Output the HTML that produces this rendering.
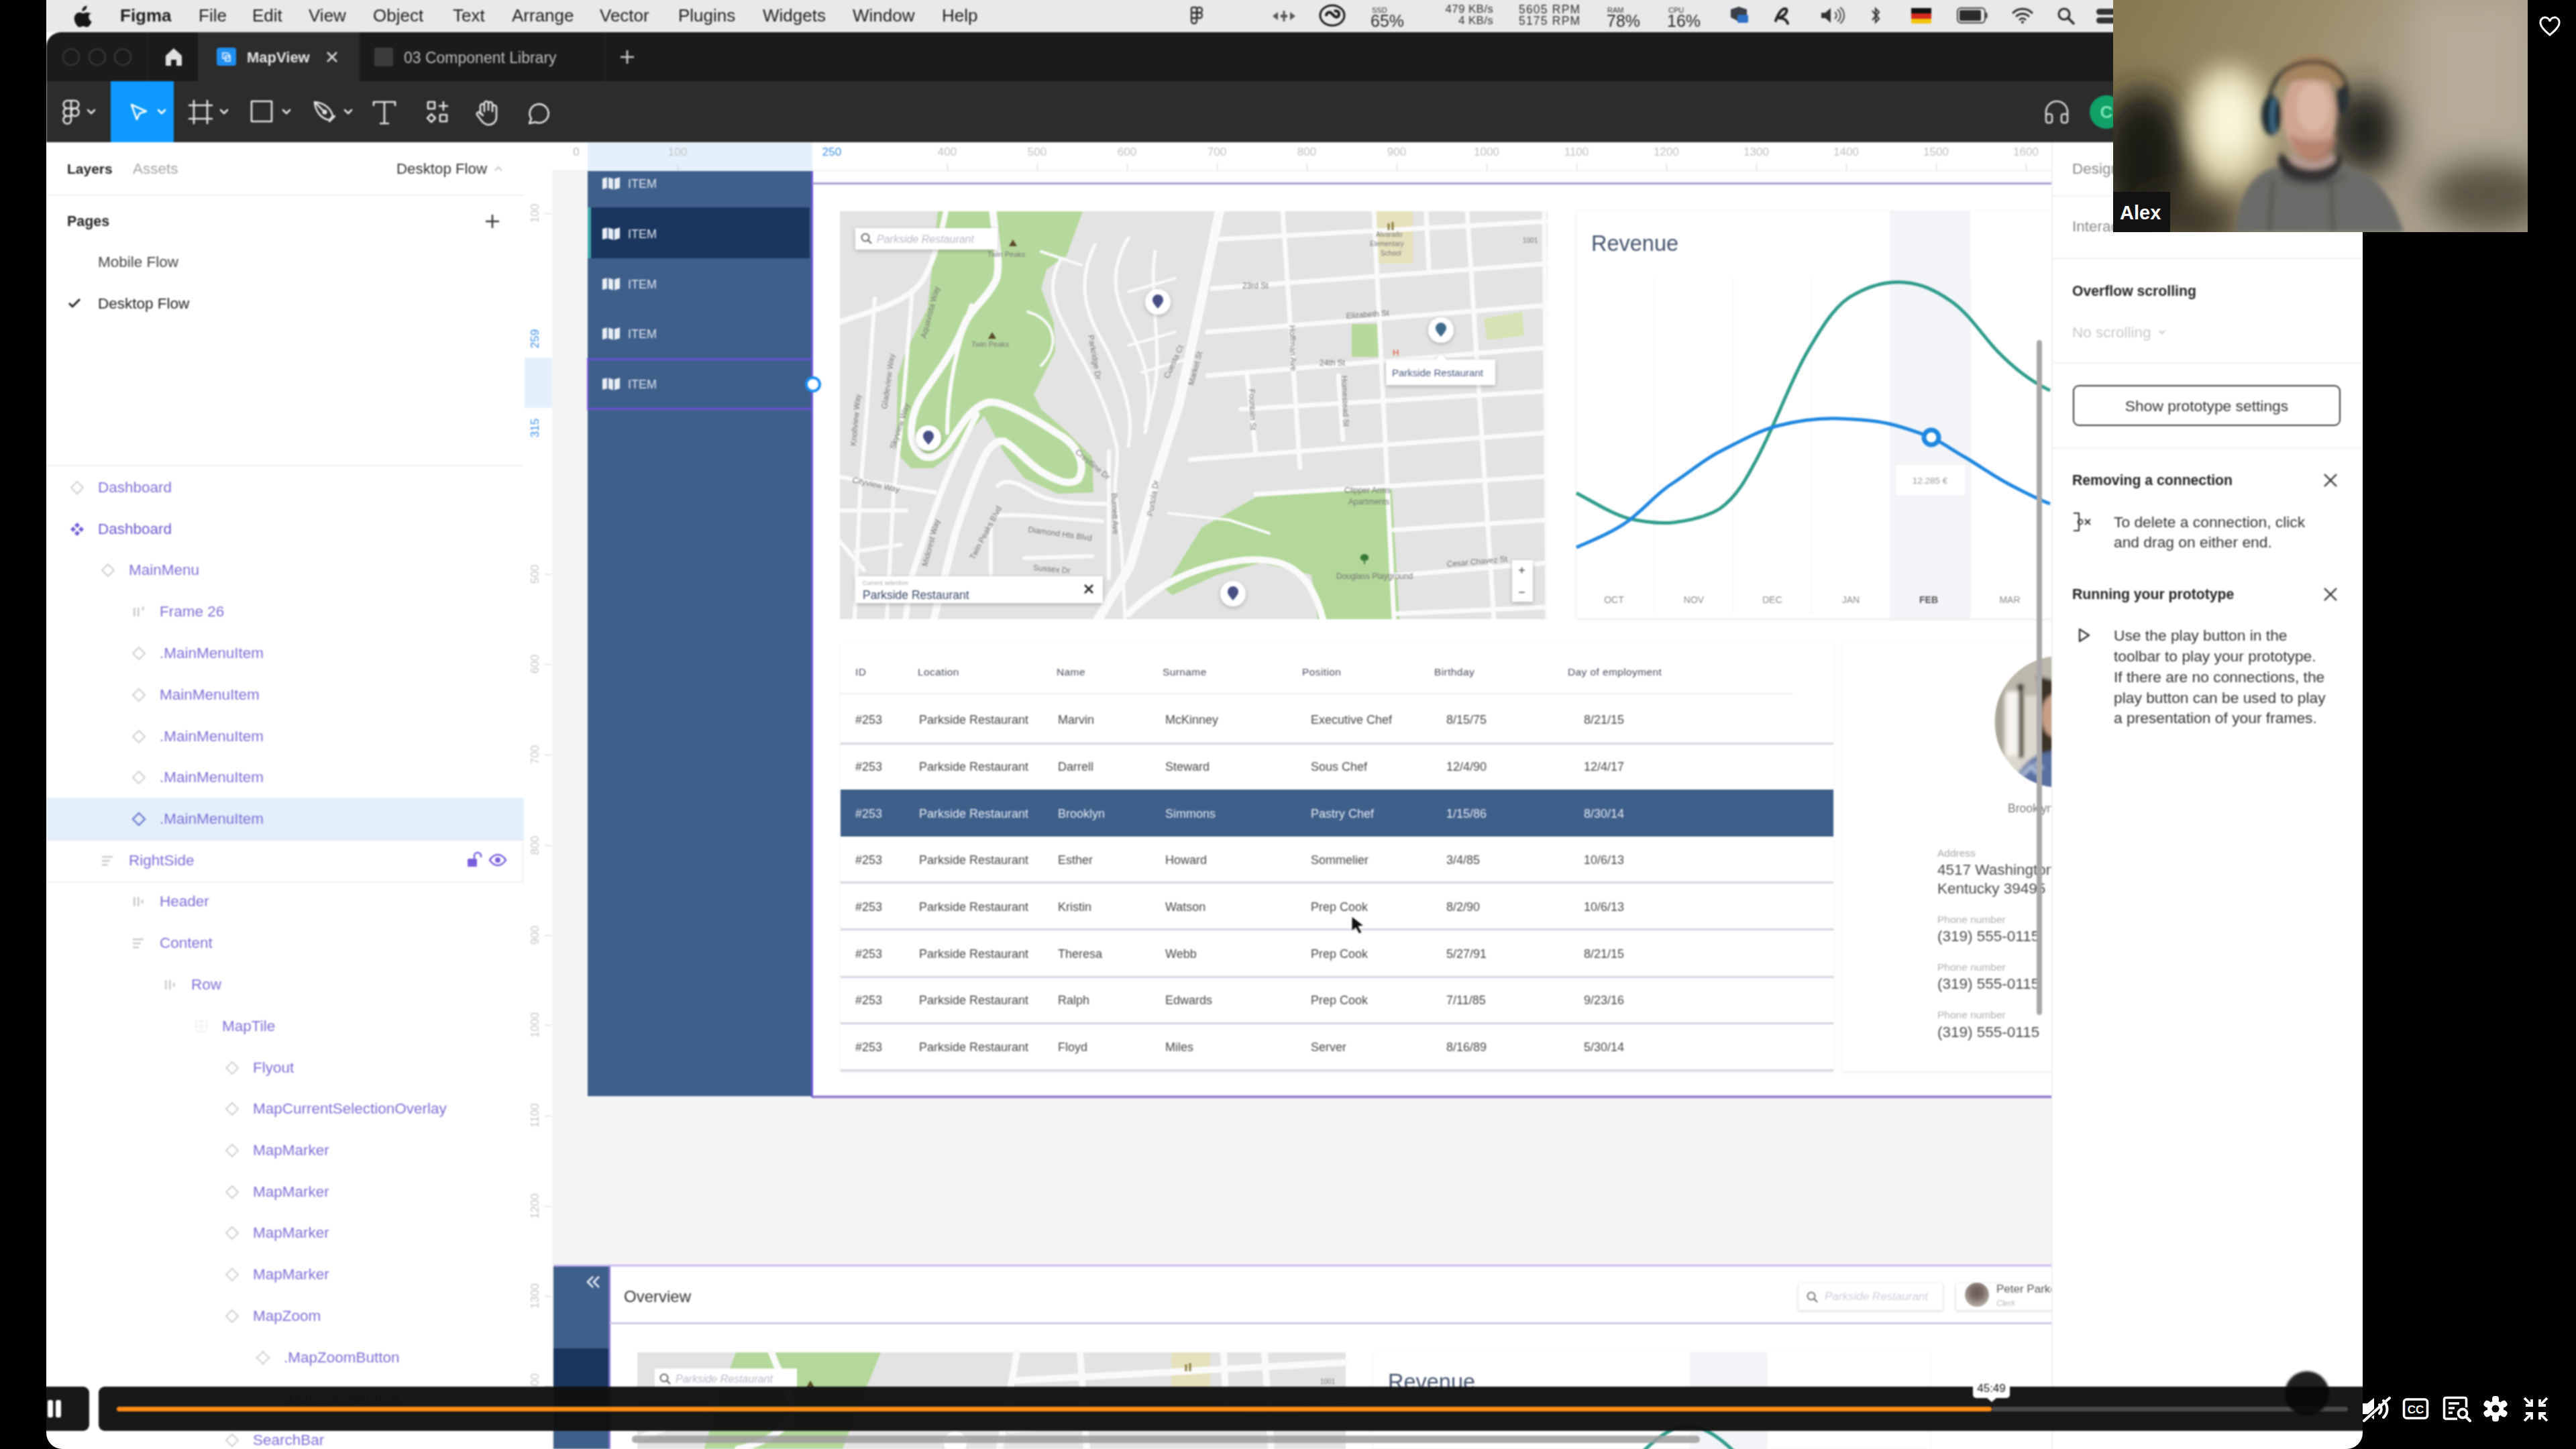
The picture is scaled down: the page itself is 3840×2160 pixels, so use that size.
<!DOCTYPE html>
<html><head><meta charset="utf-8">
<style>
html,body{margin:0;padding:0;width:3840px;height:2160px;overflow:hidden;background:#000;font-family:"Liberation Sans",sans-serif;}
.a{position:absolute;}
.t{position:absolute;white-space:nowrap;}
#frame{position:absolute;left:0;top:0;width:3840px;height:2160px;clip-path:inset(0 318px 0 69px round 0 0 24px 24px);background:#fff;filter:blur(0.9px);}
.mb{position:absolute;top:0;height:46px;line-height:46px;font-size:26px;color:#1e1e1e;}
.stat{position:absolute;font-size:14px;line-height:14px;color:#333;}
.statb{position:absolute;font-size:25px;line-height:25px;color:#2a2a2a;}
.ly{font-size:22.5px;line-height:40px;}
.tb{position:absolute;top:121px;height:91px;}
svg{position:absolute;overflow:visible;}
</style></head>
<body>
<div id="frame">
  <div class="a" style="left:0;top:-40px;width:3840px;height:40px;background:#e9e9ec"></div>
  <div class="a" style="left:0;top:2160px;width:3840px;height:40px;background:#fff"></div>
  <!-- ===== MENU BAR ===== -->
  <div class="a" style="left:69px;top:0;width:3453px;height:48px;background:#e9e9ec"></div>
  <svg style="left:110px;top:8px" width="28" height="32" viewBox="0 0 28 32"><path d="M19.5 0.5c0.3 2.2-0.6 4.3-1.9 5.8-1.4 1.5-3.3 2.6-5.3 2.5-0.3-2.1 0.7-4.3 2-5.7 1.4-1.5 3.5-2.5 5.2-2.6zM25.8 11.3c-0.2 0.1-3.5 2-3.5 6.1 0 4.8 4.2 6.5 4.3 6.5 0 0.1-0.7 2.3-2.2 4.6-1.4 2-2.8 3.9-5 3.9-2.2 0-2.8-1.3-5.3-1.3-2.5 0-3.3 1.3-5.3 1.4-2.1 0.1-3.7-2.1-5.1-4.1C0.9 24.3-0.9 17.6 2.8 13.5c1.4-1.9 3.6-3.1 5.9-3.1 2.2 0 3.6 1.4 5.4 1.4 1.7 0 2.8-1.4 5.4-1.4 1.9 0 4.5 0.7 6.3 2.9z" fill="#151515"/></svg>
  <div class="mb" style="left:179px;font-weight:bold;">Figma</div>
  <div class="mb" style="left:296px;">File</div>
  <div class="mb" style="left:376px;">Edit</div>
  <div class="mb" style="left:460px;">View</div>
  <div class="mb" style="left:556px;">Object</div>
  <div class="mb" style="left:675px;">Text</div>
  <div class="mb" style="left:763px;">Arrange</div>
  <div class="mb" style="left:894px;">Vector</div>
  <div class="mb" style="left:1011px;">Plugins</div>
  <div class="mb" style="left:1137px;">Widgets</div>
  <div class="mb" style="left:1271px;">Window</div>
  <div class="mb" style="left:1404px;">Help</div>
  <!-- status icons -->
  <svg style="left:1774px;top:9px" width="20" height="30" viewBox="0 0 20 30"><g fill="none" stroke="#333" stroke-width="2.4"><rect x="2" y="2" width="8" height="8" rx="2"/><rect x="10" y="2" width="8" height="8" rx="4"/><rect x="2" y="10" width="8" height="8" rx="2"/><circle cx="14" cy="14" r="4"/><path d="M2 18h8v4a4 4 0 0 1-8 0z"/></g></svg>
  <svg style="left:1895px;top:14px" width="38" height="20" viewBox="0 0 38 20"><path d="M2 10l8-6v12zM36 10l-8-6v12zM14 8h10v4H14z" fill="#555"/><path d="M19 2v16" stroke="#555" stroke-width="3"/></svg>
  <svg style="left:1966px;top:5px" width="40" height="36" viewBox="0 0 40 36"><ellipse cx="20" cy="18" rx="18" ry="15" fill="none" stroke="#1a1a1a" stroke-width="3"/><path d="M11 19c0-5 4-7 7-5l5 5c3 3 7 1 7-3 0-4-4-6-7-4" fill="none" stroke="#1a1a1a" stroke-width="4"/></svg>
  <div class="stat" style="left:2045px;top:8px;font-size:11px;">SSD</div>
  <div class="statb" style="left:2043px;top:19px;">65%</div>
  <div class="stat" style="left:2126px;top:7px;width:100px;text-align:right;font-size:17px;letter-spacing:0.3px;">479 KB/s</div>
  <div class="stat" style="left:2126px;top:24px;width:100px;text-align:right;font-size:17px;letter-spacing:0.3px;">4 KB/s</div>
  <div class="stat" style="left:2264px;top:7px;font-size:17.5px;letter-spacing:1.2px;">5605 RPM</div>
  <div class="stat" style="left:2264px;top:24px;font-size:17.5px;letter-spacing:1.2px;">5175 RPM</div>
  <div class="stat" style="left:2396px;top:8px;font-size:11px;">RAM</div>
  <div class="statb" style="left:2395px;top:19px;">78%</div>
  <div class="stat" style="left:2487px;top:8px;font-size:11px;">CPU</div>
  <div class="statb" style="left:2485px;top:19px;">16%</div>
  <svg style="left:2577px;top:8px" width="32" height="30" viewBox="0 0 32 30"><path d="M3 6l12-4 12 4v12l-12 6-12-6z" fill="#3a3f48"/><rect x="13" y="14" width="16" height="12" rx="2" fill="#2f6fc4"/></svg>
  <svg style="left:2643px;top:9px" width="34" height="28" viewBox="0 0 34 28"><path d="M4 22c3-8 8-18 14-18 4 0 3 6-2 10-3 2-8 4-8 4 5 0 11 0 14 8" fill="none" stroke="#222" stroke-width="4" stroke-linecap="round"/></svg>
  <svg style="left:2713px;top:10px" width="36" height="26" viewBox="0 0 36 26"><path d="M2 9h6l8-7v22l-8-7H2z" fill="#333"/><path d="M22 8a6 6 0 0 1 0 10M26 4a11 11 0 0 1 0 18M30 1a15 15 0 0 1 0 24" fill="none" stroke="#444" stroke-width="2"/></svg>
  <svg style="left:2788px;top:8px" width="16" height="30" viewBox="0 0 16 30"><path d="M3 8l10 12-5 5V5l5 5-10 12" fill="none" stroke="#333" stroke-width="2.2"/></svg>
  <div class="a" style="left:2849px;top:12px;width:30px;height:8px;background:#111"></div>
  <div class="a" style="left:2849px;top:20px;width:30px;height:8px;background:#d42a1f"></div>
  <div class="a" style="left:2849px;top:28px;width:30px;height:7px;background:#f2c40c"></div>
  <svg style="left:2917px;top:11px" width="48" height="24" viewBox="0 0 48 24"><rect x="1" y="1" width="41" height="22" rx="5" fill="none" stroke="#444" stroke-width="2"/><rect x="4" y="4" width="32" height="16" rx="2" fill="#2a2a2a"/><path d="M44 8v8" stroke="#444" stroke-width="3"/></svg>
  <svg style="left:2999px;top:10px" width="32" height="26" viewBox="0 0 32 26"><path d="M2 9a20 20 0 0 1 28 0M7 14a13 13 0 0 1 18 0M12 19a6 6 0 0 1 8 0" fill="none" stroke="#2a2a2a" stroke-width="3" stroke-linecap="round"/><circle cx="16" cy="23" r="2" fill="#2a2a2a"/></svg>
  <svg style="left:3066px;top:10px" width="28" height="28" viewBox="0 0 28 28"><circle cx="11" cy="11" r="8" fill="none" stroke="#2a2a2a" stroke-width="3"/><path d="M17 17l8 8" stroke="#2a2a2a" stroke-width="3.5" stroke-linecap="round"/></svg>
  <svg style="left:3124px;top:11px" width="34" height="26" viewBox="0 0 34 26"><rect x="1" y="2" width="30" height="9" rx="4.5" fill="#333"/><rect x="1" y="15" width="30" height="9" rx="4.5" fill="#333"/></svg>

  <!-- ===== TAB BAR ===== -->
  <div class="a" style="left:69px;top:48px;width:3453px;height:73px;background:#1b1b1b;border-radius:22px 0 0 0"></div>
  <div class="a" style="left:295px;top:48px;width:241px;height:73px;background:#2c2c2c"></div>
  <div class="a" style="left:220px;top:48px;width:1px;height:73px;background:#2a2a2a"></div>
  <div class="a" style="left:901px;top:48px;width:1px;height:73px;background:#2a2a2a"></div>
  <div class="a" style="left:93px;top:72px;width:22px;height:22px;border:2px solid #3b3b3b;border-radius:50%"></div>
  <div class="a" style="left:132px;top:72px;width:22px;height:22px;border:2px solid #3b3b3b;border-radius:50%"></div>
  <div class="a" style="left:170px;top:72px;width:22px;height:22px;border:2px solid #3b3b3b;border-radius:50%"></div>
  <svg style="left:246px;top:71px" width="26" height="28" viewBox="0 0 26 28"><path d="M13 1L1 12v15h8v-9h8v9h8V12z" fill="#e0e0e0"/></svg>
  <div class="a" style="left:323px;top:71px;width:29px;height:27px;background:#1f8ff0;border-radius:4px"></div>
  <svg style="left:323px;top:71px" width="29" height="27" viewBox="0 0 29 27"><path d="M9 8h6a4 4 0 0 1 0 8H9zM13 12h7v8h-7z" fill="none" stroke="#cfe6ff" stroke-width="2"/></svg>
  <div class="t" style="left:368px;top:68px;font-size:22px;line-height:36px;color:#e4e4e4;font-weight:bold;">MapView</div>
  <svg style="left:486px;top:76px" width="18" height="18" viewBox="0 0 18 18"><path d="M2 2l14 14M16 2L2 16" stroke="#d8d8d8" stroke-width="2.6"/></svg>
  <div class="a" style="left:558px;top:71px;width:28px;height:28px;background:#3b3b3b;border-radius:3px"></div>
  <div class="t" style="left:602px;top:68px;font-size:23px;line-height:36px;color:#bdbdbd;">03 Component Library</div>
  <svg style="left:924px;top:74px" width="22" height="22" viewBox="0 0 22 22"><path d="M11 1v20M1 11h20" stroke="#d0d0d0" stroke-width="2.6"/></svg>

  <!-- ===== TOOLBAR ===== -->
  <div class="a" style="left:69px;top:121px;width:3453px;height:91px;background:#2c2c2c"></div>
  <div class="a" style="left:165px;top:121px;width:94px;height:91px;background:#0d99ff"></div>
  <g></g>
  <svg style="left:0;top:0" width="3840" height="220" viewBox="0 0 3840 220">
    <g fill="none" stroke="#e6e6e6" stroke-width="2.6" stroke-linecap="round" stroke-linejoin="round">
      <!-- figma logo -->
      <path d="M106 150h-5.5a5.75 5.75 0 0 0 0 11.5h5.5zM106 150h5.5a5.75 5.75 0 0 1 0 11.5h-5.5zM106 161.5h-5.5a5.75 5.75 0 0 0 0 11.5h5.5zM106 173h-5.5a5.75 5.75 0 1 0 5.5 5.75z"/><circle cx="111.75" cy="167.25" r="5.75"/>
      <path d="M131 164l5 5 5-5"/>
      <!-- select arrow -->
      <path d="M196 156l22 10-10 3-4 9z" stroke="#fff"/>
      <path d="M236 164l5 5 5-5" stroke="#fff"/>
      <!-- frame -->
      <path d="M289 150v34M309 150v34M282 157h34M282 177h34"/>
      <path d="M329 164l5 5 5-5"/>
      <!-- rect -->
      <rect x="375" y="151" width="30" height="30"/>
      <path d="M422 164l5 5 5-5"/>
      <!-- pen -->
      <path d="M469 152C481 153 493 160 496 173L491 179C478 177 470 165 469 152zM469 152l14 14M491 181l8-8"/><circle cx="484" cy="167" r="2.2" fill="#e6e6e6"/>
      <path d="M514 164l5 5 5-5"/>
      <!-- text -->
      <path d="M557 152h32M573 152v32M567 184h12M557 152v5M589 152v5"/>
      <!-- components -->
      <rect x="638" y="152" width="10" height="10"/><path d="M661 152v12M655 158h12"/><path d="M643 170l6 6-6 6-6-6z"/><rect x="656" y="171" width="10" height="10"/>
      <!-- hand -->
      <path d="M716 170v-12a3 3 0 0 1 6 0v8M722 164v-10a3 3 0 0 1 6 0v10M728 164v-9a3 3 0 0 1 6 0v11M734 166v-6a3 3 0 0 1 6 0v14c0 8-6 12-12 12-5 0-8-3-11-7l-6-8a3 3 0 0 1 5-3l4 4"/>
      <!-- comment -->
      <path d="M789 184l3-7a14 14 0 1 1 6 5z"/>
    </g>
  </svg>

  <svg style="left:3046px;top:148px" width="40" height="38" viewBox="0 0 40 38"><g fill="none" stroke="#d8d8d8" stroke-width="2.6"><path d="M4 24V19a16 16 0 0 1 32 0v5"/><rect x="4" y="22" width="9" height="13" rx="3"/><rect x="27" y="22" width="9" height="13" rx="3"/></g></svg>
  <div class="a" style="left:3115px;top:142px;width:50px;height:50px;border-radius:50%;background:#10a068"></div>
  <div class="t" style="left:3115px;top:150px;width:50px;text-align:center;font-size:26px;line-height:34px;font-weight:bold;color:#7ee8b8">C</div>
  <!-- ===== LEFT PANEL ===== -->
  <div class="a" style="left:69px;top:212px;width:712px;height:1948px;background:#fff"></div>
  <div class="t" style="left:100px;top:236px;font-size:21px;line-height:32px;font-weight:bold;color:#222">Layers</div>
  <div class="t" style="left:198px;top:236px;font-size:22.5px;line-height:32px;color:#a5a5a5">Assets</div>
  <div class="t" style="left:591px;top:236px;font-size:22.3px;line-height:32px;color:#333">Desktop Flow</div>
  <svg style="left:736px;top:246px" width="14" height="10" viewBox="0 0 14 10"><path d="M2 8l5-5 5 5" fill="none" stroke="#c8c8c8" stroke-width="2"/></svg>
  <div class="a" style="left:69px;top:290px;width:712px;height:2px;background:#f0f0f0"></div>
  <div class="t" style="left:100px;top:314px;font-size:21.4px;line-height:32px;font-weight:bold;color:#222">Pages</div>
  <svg style="left:722px;top:318px" width="24" height="24" viewBox="0 0 24 24"><path d="M12 2v20M2 12h20" stroke="#333" stroke-width="2.4"/></svg>
  <div class="t" style="left:146px;top:375px;font-size:22.5px;line-height:32px;color:#444">Mobile Flow</div>
  <svg style="left:101px;top:443px" width="20" height="18" viewBox="0 0 20 18"><path d="M2 9l5 5 11-11" fill="none" stroke="#222" stroke-width="3"/></svg>
  <div class="t" style="left:146px;top:437px;font-size:22.5px;line-height:32px;color:#222">Desktop Flow</div>
  <div class="a" style="left:69px;top:693px;width:712px;height:2px;background:#f2f2f2"></div>
  <div class="a" style="left:69px;top:1189px;width:712px;height:63px;background:#e3effb"></div>
  <div class="a" style="left:69px;top:1252px;width:710px;height:61px;border:1px solid #e4e0f2;border-left:none"></div>
  <svg style="left:694px;top:1268px" width="24" height="26" viewBox="0 0 24 26"><rect x="3" y="12" width="14" height="12" rx="1.5" fill="#7a5fdc"/><path d="M13 12V8a5 5 0 0 1 10 0v2" fill="none" stroke="#7a5fdc" stroke-width="2.4"/></svg>
  <svg style="left:728px;top:1272px" width="28" height="20" viewBox="0 0 28 20"><path d="M2 10c4-6 8-8 12-8s8 2 12 8c-4 6-8 8-12 8s-8-2-12-8z" fill="none" stroke="#7a5fdc" stroke-width="2.4"/><circle cx="14" cy="10" r="4" fill="#7a5fdc"/></svg>
<div class="t ly" style="left:146px;top:707px;color:#7d70d4">Dashboard</div>
<svg style="left:104px;top:716px" width="22" height="22" viewBox="0 0 22 22"><path d="M11 2l9 9-9 9-9-9z" fill="none" stroke="#d0d0d0" stroke-width="2"/></svg>
<div class="t ly" style="left:146px;top:769px;color:#6a58cc">Dashboard</div>
<svg style="left:104px;top:778px" width="22" height="22" viewBox="0 0 22 22"><g fill="#6f5bd8"><path d="M11 1l4 4-4 4-4-4z"/><path d="M11 13l4 4-4 4-4-4z"/><path d="M5 7l4 4-4 4-4-4z"/><path d="M17 7l4 4-4 4-4-4z"/></g></svg>
<div class="t ly" style="left:192px;top:830px;color:#7d70d4">MainMenu</div>
<svg style="left:150px;top:839px" width="22" height="22" viewBox="0 0 22 22"><path d="M11 2l9 9-9 9-9-9z" fill="none" stroke="#d0d0d0" stroke-width="2"/></svg>
<div class="t ly" style="left:238px;top:892px;color:#7d70d4">Frame 26</div>
<svg style="left:196px;top:901px" width="22" height="22" viewBox="0 0 22 22"><g fill="#c8c8c8"><rect x="3" y="5" width="2.5" height="13"/><rect x="9" y="5" width="2.5" height="13"/><rect x="16" y="3" width="2.5" height="6"/></g></svg>
<div class="t ly" style="left:238px;top:954px;color:#7d70d4">.MainMenuItem</div>
<svg style="left:196px;top:963px" width="22" height="22" viewBox="0 0 22 22"><path d="M11 2l9 9-9 9-9-9z" fill="none" stroke="#d0d0d0" stroke-width="2"/></svg>
<div class="t ly" style="left:238px;top:1016px;color:#7d70d4">MainMenuItem</div>
<svg style="left:196px;top:1025px" width="22" height="22" viewBox="0 0 22 22"><path d="M11 2l9 9-9 9-9-9z" fill="none" stroke="#d0d0d0" stroke-width="2"/></svg>
<div class="t ly" style="left:238px;top:1078px;color:#7d70d4">.MainMenuItem</div>
<svg style="left:196px;top:1087px" width="22" height="22" viewBox="0 0 22 22"><path d="M11 2l9 9-9 9-9-9z" fill="none" stroke="#d0d0d0" stroke-width="2"/></svg>
<div class="t ly" style="left:238px;top:1139px;color:#7d70d4">.MainMenuItem</div>
<svg style="left:196px;top:1148px" width="22" height="22" viewBox="0 0 22 22"><path d="M11 2l9 9-9 9-9-9z" fill="none" stroke="#d0d0d0" stroke-width="2"/></svg>
<div class="t ly" style="left:238px;top:1201px;color:#7d70d4">.MainMenuItem</div>
<svg style="left:196px;top:1210px" width="22" height="22" viewBox="0 0 22 22"><path d="M11 2l9 9-9 9-9-9z" fill="none" stroke="#6f7fd0" stroke-width="2.4"/></svg>
<div class="t ly" style="left:192px;top:1263px;color:#7d70d4">RightSide</div>
<svg style="left:150px;top:1272px" width="22" height="22" viewBox="0 0 22 22"><g fill="#c8c8c8"><rect x="2" y="4" width="16" height="2.5"/><rect x="2" y="10" width="12" height="2.5"/><rect x="2" y="16" width="9" height="2.5"/></g></svg>
<div class="t ly" style="left:238px;top:1324px;color:#7d70d4">Header</div>
<svg style="left:196px;top:1333px" width="22" height="22" viewBox="0 0 22 22"><g fill="#c8c8c8"><rect x="3" y="4" width="2.5" height="14"/><rect x="9" y="4" width="2.5" height="14"/><rect x="15" y="8" width="2.5" height="6"/></g></svg>
<div class="t ly" style="left:238px;top:1386px;color:#7d70d4">Content</div>
<svg style="left:196px;top:1395px" width="22" height="22" viewBox="0 0 22 22"><g fill="#c8c8c8"><rect x="2" y="4" width="16" height="2.5"/><rect x="2" y="10" width="12" height="2.5"/><rect x="2" y="16" width="9" height="2.5"/></g></svg>
<div class="t ly" style="left:285px;top:1448px;color:#7d70d4">Row</div>
<svg style="left:243px;top:1457px" width="22" height="22" viewBox="0 0 22 22"><g fill="#c8c8c8"><rect x="3" y="4" width="2.5" height="14"/><rect x="9" y="4" width="2.5" height="14"/><rect x="15" y="8" width="2.5" height="6"/></g></svg>
<div class="t ly" style="left:331px;top:1510px;color:#7d70d4">MapTile</div>
<svg style="left:289px;top:1519px" width="22" height="22" viewBox="0 0 22 22"><g fill="none" stroke="#dcdcdc" stroke-width="1.5" stroke-dasharray="2 3"><rect x="3" y="3" width="16" height="16"/><path d="M11 3v16M3 11h16"/></g></svg>
<div class="t ly" style="left:377px;top:1572px;color:#7d70d4">Flyout</div>
<svg style="left:335px;top:1581px" width="22" height="22" viewBox="0 0 22 22"><path d="M11 2l9 9-9 9-9-9z" fill="none" stroke="#d0d0d0" stroke-width="2"/></svg>
<div class="t ly" style="left:377px;top:1633px;color:#7d70d4">MapCurrentSelectionOverlay</div>
<svg style="left:335px;top:1642px" width="22" height="22" viewBox="0 0 22 22"><path d="M11 2l9 9-9 9-9-9z" fill="none" stroke="#d0d0d0" stroke-width="2"/></svg>
<div class="t ly" style="left:377px;top:1695px;color:#7d70d4">MapMarker</div>
<svg style="left:335px;top:1704px" width="22" height="22" viewBox="0 0 22 22"><path d="M11 2l9 9-9 9-9-9z" fill="none" stroke="#d0d0d0" stroke-width="2"/></svg>
<div class="t ly" style="left:377px;top:1757px;color:#7d70d4">MapMarker</div>
<svg style="left:335px;top:1766px" width="22" height="22" viewBox="0 0 22 22"><path d="M11 2l9 9-9 9-9-9z" fill="none" stroke="#d0d0d0" stroke-width="2"/></svg>
<div class="t ly" style="left:377px;top:1818px;color:#7d70d4">MapMarker</div>
<svg style="left:335px;top:1827px" width="22" height="22" viewBox="0 0 22 22"><path d="M11 2l9 9-9 9-9-9z" fill="none" stroke="#d0d0d0" stroke-width="2"/></svg>
<div class="t ly" style="left:377px;top:1880px;color:#7d70d4">MapMarker</div>
<svg style="left:335px;top:1889px" width="22" height="22" viewBox="0 0 22 22"><path d="M11 2l9 9-9 9-9-9z" fill="none" stroke="#d0d0d0" stroke-width="2"/></svg>
<div class="t ly" style="left:377px;top:1942px;color:#7d70d4">MapZoom</div>
<svg style="left:335px;top:1951px" width="22" height="22" viewBox="0 0 22 22"><path d="M11 2l9 9-9 9-9-9z" fill="none" stroke="#d0d0d0" stroke-width="2"/></svg>
<div class="t ly" style="left:423px;top:2004px;color:#7d70d4">.MapZoomButton</div>
<svg style="left:381px;top:2013px" width="22" height="22" viewBox="0 0 22 22"><path d="M11 2l9 9-9 9-9-9z" fill="none" stroke="#d0d0d0" stroke-width="2"/></svg>
<div class="t ly" style="left:423px;top:2066px;color:#7d70d4">.MapZoomButton</div>
<svg style="left:381px;top:2075px" width="22" height="22" viewBox="0 0 22 22"><path d="M11 2l9 9-9 9-9-9z" fill="none" stroke="#d0d0d0" stroke-width="2"/></svg>
<div class="t ly" style="left:377px;top:2127px;color:#7d70d4">SearchBar</div>
<svg style="left:335px;top:2136px" width="22" height="22" viewBox="0 0 22 22"><path d="M11 2l9 9-9 9-9-9z" fill="none" stroke="#d0d0d0" stroke-width="2"/></svg>

  <!-- ===== RULERS ===== -->
  <div class="a" style="left:781px;top:212px;width:2277px;height:42px;background:#fff;border-bottom:1px solid #e6e6e6"></div>
  <div class="a" style="left:876px;top:213px;width:335px;height:41px;background:#e4f0fb"></div>
  <div class="a" style="left:781px;top:254px;width:42px;height:1906px;background:#fff;border-right:1px solid #ececec"></div>
  <div class="a" style="left:782px;top:533px;width:41px;height:75px;background:#e4f0fb"></div>
  <div class="t" style="left:829px;top:217px;width:60px;text-align:center;font-size:17px;line-height:20px;color:#b8b8b8">0</div>
  <div class="t" style="left:980px;top:217px;width:60px;text-align:center;font-size:17px;line-height:20px;color:#c4c4c4">100</div>
  <div class="a" style="left:1010px;top:244px;width:1px;height:10px;background:#d0d0d0"></div>
  <div class="t" style="left:1210px;top:217px;width:60px;text-align:center;font-size:17px;line-height:20px;color:#3b8de0">250</div>
  <div class="t" style="left:1382px;top:217px;width:60px;text-align:center;font-size:17px;line-height:20px;color:#c0c0c0">400</div>
  <div class="a" style="left:1412px;top:244px;width:1px;height:10px;background:#d0d0d0"></div>
  <div class="t" style="left:1516px;top:217px;width:60px;text-align:center;font-size:17px;line-height:20px;color:#c0c0c0">500</div>
  <div class="a" style="left:1546px;top:244px;width:1px;height:10px;background:#d0d0d0"></div>
  <div class="t" style="left:1650px;top:217px;width:60px;text-align:center;font-size:17px;line-height:20px;color:#c0c0c0">600</div>
  <div class="a" style="left:1680px;top:244px;width:1px;height:10px;background:#d0d0d0"></div>
  <div class="t" style="left:1784px;top:217px;width:60px;text-align:center;font-size:17px;line-height:20px;color:#c0c0c0">700</div>
  <div class="a" style="left:1814px;top:244px;width:1px;height:10px;background:#d0d0d0"></div>
  <div class="t" style="left:1918px;top:217px;width:60px;text-align:center;font-size:17px;line-height:20px;color:#c0c0c0">800</div>
  <div class="a" style="left:1948px;top:244px;width:1px;height:10px;background:#d0d0d0"></div>
  <div class="t" style="left:2052px;top:217px;width:60px;text-align:center;font-size:17px;line-height:20px;color:#c0c0c0">900</div>
  <div class="a" style="left:2082px;top:244px;width:1px;height:10px;background:#d0d0d0"></div>
  <div class="t" style="left:2186px;top:217px;width:60px;text-align:center;font-size:17px;line-height:20px;color:#c0c0c0">1000</div>
  <div class="a" style="left:2216px;top:244px;width:1px;height:10px;background:#d0d0d0"></div>
  <div class="t" style="left:2320px;top:217px;width:60px;text-align:center;font-size:17px;line-height:20px;color:#c0c0c0">1100</div>
  <div class="a" style="left:2350px;top:244px;width:1px;height:10px;background:#d0d0d0"></div>
  <div class="t" style="left:2454px;top:217px;width:60px;text-align:center;font-size:17px;line-height:20px;color:#c0c0c0">1200</div>
  <div class="a" style="left:2484px;top:244px;width:1px;height:10px;background:#d0d0d0"></div>
  <div class="t" style="left:2588px;top:217px;width:60px;text-align:center;font-size:17px;line-height:20px;color:#c0c0c0">1300</div>
  <div class="a" style="left:2618px;top:244px;width:1px;height:10px;background:#d0d0d0"></div>
  <div class="t" style="left:2722px;top:217px;width:60px;text-align:center;font-size:17px;line-height:20px;color:#c0c0c0">1400</div>
  <div class="a" style="left:2752px;top:244px;width:1px;height:10px;background:#d0d0d0"></div>
  <div class="t" style="left:2856px;top:217px;width:60px;text-align:center;font-size:17px;line-height:20px;color:#c0c0c0">1500</div>
  <div class="a" style="left:2886px;top:244px;width:1px;height:10px;background:#d0d0d0"></div>
  <div class="t" style="left:2990px;top:217px;width:60px;text-align:center;font-size:17px;line-height:20px;color:#c0c0c0">1600</div>
  <div class="a" style="left:3020px;top:244px;width:1px;height:10px;background:#d0d0d0"></div>
  <div class="t" style="left:778px;top:308px;width:40px;height:20px;text-align:center;font-size:17px;line-height:20px;color:#c4c4c4;transform:rotate(-90deg)">100</div>
  <div class="a" style="left:812px;top:318px;width:10px;height:1px;background:#d0d0d0"></div>
  <div class="t" style="left:778px;top:495px;width:40px;height:20px;text-align:center;font-size:17px;line-height:20px;color:#3b8de0;transform:rotate(-90deg)">259</div>
  <div class="t" style="left:778px;top:628px;width:40px;height:20px;text-align:center;font-size:17px;line-height:20px;color:#3b8de0;transform:rotate(-90deg)">315</div>
  <div class="t" style="left:778px;top:846px;width:40px;height:20px;text-align:center;font-size:17px;line-height:20px;color:#c4c4c4;transform:rotate(-90deg)">500</div>
  <div class="a" style="left:812px;top:856px;width:10px;height:1px;background:#d0d0d0"></div>
  <div class="t" style="left:778px;top:980px;width:40px;height:20px;text-align:center;font-size:17px;line-height:20px;color:#c4c4c4;transform:rotate(-90deg)">600</div>
  <div class="a" style="left:812px;top:990px;width:10px;height:1px;background:#d0d0d0"></div>
  <div class="t" style="left:778px;top:1115px;width:40px;height:20px;text-align:center;font-size:17px;line-height:20px;color:#c4c4c4;transform:rotate(-90deg)">700</div>
  <div class="a" style="left:812px;top:1125px;width:10px;height:1px;background:#d0d0d0"></div>
  <div class="t" style="left:778px;top:1250px;width:40px;height:20px;text-align:center;font-size:17px;line-height:20px;color:#c4c4c4;transform:rotate(-90deg)">800</div>
  <div class="a" style="left:812px;top:1260px;width:10px;height:1px;background:#d0d0d0"></div>
  <div class="t" style="left:778px;top:1384px;width:40px;height:20px;text-align:center;font-size:17px;line-height:20px;color:#c4c4c4;transform:rotate(-90deg)">900</div>
  <div class="a" style="left:812px;top:1394px;width:10px;height:1px;background:#d0d0d0"></div>
  <div class="t" style="left:778px;top:1518px;width:40px;height:20px;text-align:center;font-size:17px;line-height:20px;color:#c4c4c4;transform:rotate(-90deg)">1000</div>
  <div class="a" style="left:812px;top:1528px;width:10px;height:1px;background:#d0d0d0"></div>
  <div class="t" style="left:778px;top:1653px;width:40px;height:20px;text-align:center;font-size:17px;line-height:20px;color:#c4c4c4;transform:rotate(-90deg)">1100</div>
  <div class="a" style="left:812px;top:1663px;width:10px;height:1px;background:#d0d0d0"></div>
  <div class="t" style="left:778px;top:1788px;width:40px;height:20px;text-align:center;font-size:17px;line-height:20px;color:#c4c4c4;transform:rotate(-90deg)">1200</div>
  <div class="a" style="left:812px;top:1798px;width:10px;height:1px;background:#d0d0d0"></div>
  <div class="t" style="left:778px;top:1922px;width:40px;height:20px;text-align:center;font-size:17px;line-height:20px;color:#c4c4c4;transform:rotate(-90deg)">1300</div>
  <div class="a" style="left:812px;top:1932px;width:10px;height:1px;background:#d0d0d0"></div>
  <div class="t" style="left:778px;top:2056px;width:40px;height:20px;text-align:center;font-size:17px;line-height:20px;color:#c4c4c4;transform:rotate(-90deg)">1400</div>
  <div class="a" style="left:812px;top:2066px;width:10px;height:1px;background:#d0d0d0"></div>

  <!-- ===== CANVAS ===== -->
  <div class="a" style="left:823px;top:255px;width:2235px;height:1905px;background:#f4f4f4"></div>
  <div class="a" style="left:876px;top:255px;width:335px;height:1379px;background:#3f5f8b"></div>
  <div class="a" style="left:1211px;top:255px;width:1847px;height:1380px;background:#fff"></div>
<div class="a" style="left:876px;top:309px;width:331px;height:76px;background:#1b365e"></div>
<div class="a" style="left:876px;top:309px;width:5px;height:76px;background:#3fa6a6"></div>
<svg style="left:897px;top:263px" width="28" height="20" viewBox="0 0 28 20"><path d="M1 3l8-2 9 3 9-3v16l-9 3-9-3-8 2z" fill="#e9eef5"/><path d="M9 1v17M18 4v16" stroke="#3f5f8b" stroke-width="2"/></svg>
<div class="t" style="left:936px;top:261px;font-size:18px;line-height:26px;color:#dfe6f0">ITEM</div>
<svg style="left:897px;top:338px" width="28" height="20" viewBox="0 0 28 20"><path d="M1 3l8-2 9 3 9-3v16l-9 3-9-3-8 2z" fill="#e9eef5"/><path d="M9 1v17M18 4v16" stroke="#3f5f8b" stroke-width="2"/></svg>
<div class="t" style="left:936px;top:336px;font-size:18px;line-height:26px;color:#dfe6f0">ITEM</div>
<svg style="left:897px;top:413px" width="28" height="20" viewBox="0 0 28 20"><path d="M1 3l8-2 9 3 9-3v16l-9 3-9-3-8 2z" fill="#e9eef5"/><path d="M9 1v17M18 4v16" stroke="#3f5f8b" stroke-width="2"/></svg>
<div class="t" style="left:936px;top:411px;font-size:18px;line-height:26px;color:#dfe6f0">ITEM</div>
<svg style="left:897px;top:487px" width="28" height="20" viewBox="0 0 28 20"><path d="M1 3l8-2 9 3 9-3v16l-9 3-9-3-8 2z" fill="#e9eef5"/><path d="M9 1v17M18 4v16" stroke="#3f5f8b" stroke-width="2"/></svg>
<div class="t" style="left:936px;top:485px;font-size:18px;line-height:26px;color:#dfe6f0">ITEM</div>
<svg style="left:897px;top:562px" width="28" height="20" viewBox="0 0 28 20"><path d="M1 3l8-2 9 3 9-3v16l-9 3-9-3-8 2z" fill="#e9eef5"/><path d="M9 1v17M18 4v16" stroke="#3f5f8b" stroke-width="2"/></svg>
<div class="t" style="left:936px;top:560px;font-size:18px;line-height:26px;color:#dfe6f0">ITEM</div>
<div class="a" style="left:875px;top:534px;width:336px;height:77px;box-sizing:border-box;border-top:3px solid #6a4fd6;border-bottom:3px solid #6a4fd6;border-left:2px solid #8a5fe0"></div>
<div class="a" style="left:1209px;top:255px;width:3px;height:1381px;background:#6b55d8"></div>
<div class="a" style="left:1211px;top:272px;width:1847px;height:3px;background:#a39bcf"></div>
<div class="a" style="left:1211px;top:1633px;width:1847px;height:4px;background:#9580cc"></div>
<div class="a" style="left:1200px;top:561px;width:16px;height:16px;border:4px solid #1a8cf0;border-radius:50%;background:#fff"></div><svg style="left:1252px;top:315px" width="1055" height="608" viewBox="0 0 1055 608">
<defs><filter id="sh" x="-10%" y="-30%" width="120%" height="160%"><feDropShadow dx="0" dy="2" stdDeviation="3" flood-color="#000" flood-opacity="0.25"/></filter>
<clipPath id="mclip"><rect x="0" y="0" width="1055" height="608"/></clipPath></defs>
<g clip-path="url(#mclip)">
<rect x="0" y="0" width="1055" height="608" fill="#e3e3e3"/>
<!-- parks -->
<path d="M146 0L362 0L338 66L308 87L300 115L319 166L321 209L289 273L300 295L338 328L376 366L378 419L325 421L275 398L245 360L215 305L159 368L139 383L106 383L84 360L86 245L98 209L131 145Z" fill="#b5d99c"/>
<path d="M483 562L540 471L628 422L823 414L834 608L712 608L703 542L628 524L562 542L496 572Z" fill="#b3d89a"/>
<rect x="763" y="168" width="40" height="49" fill="#b7d99c"/>
<path d="M960 160L1017 150L1020 185L965 192Z" fill="#d6e3b4"/>
<rect x="796" y="0" width="58" height="78" fill="#e6e1bd"/>
<!-- roads -->
<g fill="none" stroke="#fafafa" stroke-linecap="round" stroke-linejoin="round">
<path d="M228 0C232 40 240 80 233 102C220 130 195 145 185 170C170 210 145 240 125 270C105 300 100 340 116 358C125 370 140 372 160 350C180 320 195 292 220 285C245 280 300 315 330 335C355 350 368 380 355 400C340 410 320 400 300 388C280 375 260 350 245 343C230 340 220 355 212 372C200 400 185 440 172 480L140 608" stroke-width="11"/><path d="M204 303C185 340 165 380 150 421C135 460 118 510 106 547L98 608" stroke-width="9"/>
<path d="M566 0L535 150L505 290L470 400L432 530L385 608" stroke-width="14"/>
<path d="M0 165C40 150 90 140 118 110C135 90 150 40 158 0" stroke-width="8"/>
<path d="M52 130L40 300L30 420L22 608" stroke-width="6"/>
<path d="M108 120C100 200 96 300 80 420L70 608" stroke-width="6"/>
<path d="M196 140C175 200 160 260 160 330" stroke-width="6"/>
<path d="M0 396L142 419" stroke-width="6"/><path d="M0 446L99 446M23 507L91 497M0 492L36 535" stroke-width="6"/><path d="M235 409C245 400 260 400 290 420C310 432 340 436 396 436M230 454C250 452 275 452 320 456L391 462M225 472V540M275 517L376 514M401 358V547" stroke-width="6"/>
<path d="M330 70C300 120 330 160 350 200C380 250 400 300 410 340C420 370 405 400 412 430L420 500L425 608" stroke-width="5"/>
<path d="M380 50C350 110 370 160 395 200C420 250 440 300 430 350" stroke-width="5"/>
<path d="M430 40C400 90 410 130 430 170C450 210 470 260 455 320" stroke-width="5"/>
<path d="M470 60C460 120 480 200 470 260L455 330" stroke-width="5"/>
<path d="M430 120L500 100M430 200L500 180M450 240L520 220M300 60L360 80M280 150C320 160 330 200 300 230" stroke-width="4"/>
<path d="M490 450L580 460L640 480" stroke-width="4"/>
<path d="M430 600C470 560 520 530 600 520C660 515 700 530 720 608" stroke-width="10"/>
<!-- grid -->
<path d="M555 115L1055 78M548 180L1055 140M548 245L1055 203M598 295L1055 268M522 370L1055 330M620 422L1055 395M826 475L1055 460M826 543L1055 524M826 600L1055 590M560 42L1055 15" stroke-width="7"/>
<path d="M660 0L686 382M796 0L826 608M935 0L975 608M874 0L878 85M607 245L620 360M743 245L750 340M1050 0L1055 608" stroke-width="7"/>
</g>
<!-- labels -->
<g font-family="Liberation Sans" fill="#777" font-size="12">
<text x="600" y="115">23rd St</text>
<text x="755" y="160" transform="rotate(-4 755 160)">Elizabeth St</text>
<text x="715" y="230">24th St</text>
<text x="905" y="530" transform="rotate(-5 905 530)">Cesar Chavez St</text>
<text x="752" y="420">Clipper Arms</text>
<text x="758" y="437">Apartments</text>
<text x="740" y="548">Douglass Playground</text>
<text x="799" y="38" font-size="10">Alvarado</text>
<text x="790" y="52" font-size="10">Elementary</text>
<text x="806" y="66" font-size="10">School</text>
<text x="220" y="68" font-size="11">Twin Peaks</text>
<text x="196" y="202" font-size="11">Twin Peaks</text>
<text x="18" y="404" transform="rotate(12 18 404)">Cityview Way</text>
<text x="1018" y="47" font-size="10">1001</text>
<text x="0" y="0" transform="translate(527 260) rotate(-75)">Market St</text>
<text x="0" y="0" transform="translate(490 250) rotate(-65)">Cuesta Ct</text>
<text x="0" y="0" transform="translate(350 360) rotate(40)">Crestline Dr</text>
<text x="0" y="0" transform="translate(200 520) rotate(-62)">Twin Peaks Blvd</text>
<text x="0" y="0" transform="translate(130 530) rotate(-75)">Midcrest Way</text>
<text x="0" y="0" transform="translate(24 350) rotate(-85)">Knollview Way</text>
<text x="0" y="0" transform="translate(70 295) rotate(-82)">Gladeview Way</text>
<text x="0" y="0" transform="translate(128 190) rotate(-75)">Aquavista Way</text>
<text x="0" y="0" transform="translate(82 355) rotate(-72)">Skyview Way</text>
<text x="0" y="0" transform="translate(370 185) rotate(80)">Parkridge Dr</text>
<text x="0" y="0" transform="translate(405 420) rotate(88)">Burnett Ave</text>
<text x="0" y="0" transform="translate(466 455) rotate(-80)">Portola Dr</text>
<text x="0" y="0" transform="translate(610 265) rotate(88)">Fountain St</text>
<text x="0" y="0" transform="translate(670 170) rotate(88)">Hoffman Ave</text>
<text x="0" y="0" transform="translate(748 245) rotate(88)">Homestead St</text>
<text x="280" y="478" transform="rotate(8 280 478)">Diamond Hts Blvd</text>
<text x="288" y="535" transform="rotate(5 288 535)">Sussex Dr</text>
</g>
<!-- POI icons -->
<path d="M252 52l6-10 6 10z" fill="#5a4a2a"/><path d="M221 190l6-10 6 10z" fill="#5a4a2a"/>
<path d="M818 18v10M824 16v12" stroke="#8a7a3a" stroke-width="3"/>
<path d="M782 512c-6 0-8 8 0 8 8 0 6-8 0-8zM782 518v8" fill="#3a7a3a" stroke="#3a7a3a" stroke-width="2"/>
<text x="824" y="215" fill="#e34a2a" font-size="13" font-family="Liberation Sans">H</text>
<!-- markers -->
<g filter="url(#sh)">
<circle cx="474" cy="135" r="19" fill="#fff"/><circle cx="132" cy="338" r="19" fill="#fff"/><circle cx="896" cy="177" r="19" fill="#fff"/><circle cx="586" cy="570" r="19" fill="#fff"/>
</g>
<g fill="#474f83">
<path d="M474 145c-5-6-8-9-8-13a8 8 0 0 1 16 0c0 4-3 7-8 13z"/>
<path d="M132 348c-5-6-8-9-8-13a8 8 0 0 1 16 0c0 4-3 7-8 13z"/>
<path d="M896 187c-5-6-8-9-8-13a8 8 0 0 1 16 0c0 4-3 7-8 13z" fill="#3f6a8a"/>
<path d="M586 580c-5-6-8-9-8-13a8 8 0 0 1 16 0c0 4-3 7-8 13z"/>
</g>
<!-- flyout -->
<g filter="url(#sh)"><path d="M814 221h74l8-8 8 8h73v38H814z" fill="#fff"/></g>
<text x="823" y="246" font-size="15" fill="#4a5a80" font-family="Liberation Sans">Parkside Restaurant</text>
<!-- search -->
<g filter="url(#sh)"><rect x="23" y="25" width="212" height="32" fill="#fff"/></g>
<circle cx="38" cy="39" r="5.5" fill="none" stroke="#666" stroke-width="2"/><path d="M42 43l5 5" stroke="#666" stroke-width="2.2"/>
<text x="55" y="47" font-size="16" font-style="italic" fill="#b8bcc8" font-family="Liberation Sans">Parkside Restaurant</text>
<!-- current selection -->
<g filter="url(#sh)"><rect x="23" y="544" width="369" height="40" fill="#fff"/></g>
<text x="34" y="557" font-size="9" fill="#aaa" font-family="Liberation Sans">Current selection</text>
<text x="34" y="578" font-size="17.5" fill="#3a4a6a" font-family="Liberation Sans">Parkside Restaurant</text>
<path d="M365 557l12 12M377 557l-12 12" stroke="#222" stroke-width="2.6"/>
<!-- zoom -->
<g filter="url(#sh)"><rect x="1002" y="520" width="31" height="62" fill="#fff"/></g>
<path d="M1012 535h9M1016.5 530.5v9M1012 568h9" stroke="#555" stroke-width="1.6"/>
</g>
</svg>
<div class="a" style="left:2350px;top:315px;width:760px;height:607px;background:#fff;box-shadow:0 1px 4px rgba(0,0,0,0.12)"></div>
<svg style="left:2350px;top:315px" width="706" height="608" viewBox="0 0 706 608">
<rect x="467" y="0" width="120" height="607" fill="#f2f4f8"/>
<g stroke="#f5f5f7" stroke-width="1.5"><path d="M116 100V600M233 100V600M350 100V600M588 100V600"/></g>
<text x="22" y="59" font-family="Liberation Sans" font-size="32.5" fill="#44536e">Revenue</text>
<g font-family="Liberation Sans" font-size="14" fill="#8a8a8a" text-anchor="middle">
<text x="56" y="584">OCT</text><text x="175" y="584">NOV</text><text x="292" y="584">DEC</text><text x="409" y="584">JAN</text><text x="525" y="584" font-weight="bold" fill="#555">FEB</text><text x="646" y="584">MAR</text>
</g>
<path d="M0 420C30 436 55 452 78 458C100 463 120 466 144 464C175 460 200 452 214 443C240 425 255 395 270 367C300 310 320 250 345 208C370 165 390 135 416 123C440 110 465 104 489 106C515 108 535 118 557 133C585 152 605 185 627 208C655 237 680 255 706 267" fill="none" stroke="#2f9c8b" stroke-width="5"/>
<path d="M0 501C25 490 55 478 78 461C105 440 120 420 144 405C170 388 190 370 214 358C245 342 270 328 299 320C330 312 360 308 392 309C420 310 445 312 463 316C490 322 510 330 529 337C548 346 562 357 580 367C605 382 625 397 651 410C670 420 690 430 706 436" fill="none" stroke="#1f87df" stroke-width="5"/>
<circle cx="529" cy="337" r="11" fill="#fff" stroke="#1f87df" stroke-width="7"/>
<rect x="475" y="377" width="105" height="47" fill="#fff" stroke="#eee" stroke-width="1"/>
<text x="527" y="406" font-family="Liberation Sans" font-size="13.5" fill="#9a9a9a" text-anchor="middle">12.285 €</text>
</svg>
<div class="a" style="left:1253px;top:960px;width:1480px;height:637px;background:#fff;box-shadow:0 1px 3px rgba(0,0,0,0.10)"></div>
<div class="t" style="left:1275px;top:990px;font-size:15.5px;letter-spacing:0.4px;line-height:24px;color:#4a4e60">ID</div>
<div class="t" style="left:1368px;top:990px;font-size:15.5px;letter-spacing:0.4px;line-height:24px;color:#4a4e60">Location</div>
<div class="t" style="left:1575px;top:990px;font-size:15.5px;letter-spacing:0.4px;line-height:24px;color:#4a4e60">Name</div>
<div class="t" style="left:1733px;top:990px;font-size:15.5px;letter-spacing:0.4px;line-height:24px;color:#4a4e60">Surname</div>
<div class="t" style="left:1941px;top:990px;font-size:15.5px;letter-spacing:0.4px;line-height:24px;color:#4a4e60">Position</div>
<div class="t" style="left:2138px;top:990px;font-size:15.5px;letter-spacing:0.4px;line-height:24px;color:#4a4e60">Birthday</div>
<div class="t" style="left:2337px;top:990px;font-size:15.5px;letter-spacing:0.4px;line-height:24px;color:#4a4e60">Day of employment</div>
<div class="a" style="left:1253px;top:1033px;width:1420px;height:2px;background:#f1f1f4"></div>
<div class="a" style="left:1253px;top:1177px;width:1480px;height:70px;background:#3f5f8b"></div>
<div class="t" style="left:1275px;top:1060px;font-size:18px;line-height:26px;color:#474747">#253</div>
<div class="t" style="left:1370px;top:1060px;font-size:18px;line-height:26px;color:#474747">Parkside Restaurant</div>
<div class="t" style="left:1577px;top:1060px;font-size:18px;line-height:26px;color:#474747">Marvin</div>
<div class="t" style="left:1737px;top:1060px;font-size:18px;line-height:26px;color:#474747">McKinney</div>
<div class="t" style="left:1954px;top:1060px;font-size:18px;line-height:26px;color:#474747">Executive Chef</div>
<div class="t" style="left:2156px;top:1060px;font-size:18px;line-height:26px;color:#474747">8/15/75</div>
<div class="t" style="left:2361px;top:1060px;font-size:18px;line-height:26px;color:#474747">8/21/15</div>
<div class="t" style="left:1275px;top:1130px;font-size:18px;line-height:26px;color:#474747">#253</div>
<div class="t" style="left:1370px;top:1130px;font-size:18px;line-height:26px;color:#474747">Parkside Restaurant</div>
<div class="t" style="left:1577px;top:1130px;font-size:18px;line-height:26px;color:#474747">Darrell</div>
<div class="t" style="left:1737px;top:1130px;font-size:18px;line-height:26px;color:#474747">Steward</div>
<div class="t" style="left:1954px;top:1130px;font-size:18px;line-height:26px;color:#474747">Sous Chef</div>
<div class="t" style="left:2156px;top:1130px;font-size:18px;line-height:26px;color:#474747">12/4/90</div>
<div class="t" style="left:2361px;top:1130px;font-size:18px;line-height:26px;color:#474747">12/4/17</div>
<div class="t" style="left:1275px;top:1200px;font-size:18px;line-height:26px;color:#e4eaf2">#253</div>
<div class="t" style="left:1370px;top:1200px;font-size:18px;line-height:26px;color:#e4eaf2">Parkside Restaurant</div>
<div class="t" style="left:1577px;top:1200px;font-size:18px;line-height:26px;color:#e4eaf2">Brooklyn</div>
<div class="t" style="left:1737px;top:1200px;font-size:18px;line-height:26px;color:#e4eaf2">Simmons</div>
<div class="t" style="left:1954px;top:1200px;font-size:18px;line-height:26px;color:#e4eaf2">Pastry Chef</div>
<div class="t" style="left:2156px;top:1200px;font-size:18px;line-height:26px;color:#e4eaf2">1/15/86</div>
<div class="t" style="left:2361px;top:1200px;font-size:18px;line-height:26px;color:#e4eaf2">8/30/14</div>
<div class="t" style="left:1275px;top:1269px;font-size:18px;line-height:26px;color:#474747">#253</div>
<div class="t" style="left:1370px;top:1269px;font-size:18px;line-height:26px;color:#474747">Parkside Restaurant</div>
<div class="t" style="left:1577px;top:1269px;font-size:18px;line-height:26px;color:#474747">Esther</div>
<div class="t" style="left:1737px;top:1269px;font-size:18px;line-height:26px;color:#474747">Howard</div>
<div class="t" style="left:1954px;top:1269px;font-size:18px;line-height:26px;color:#474747">Sommelier</div>
<div class="t" style="left:2156px;top:1269px;font-size:18px;line-height:26px;color:#474747">3/4/85</div>
<div class="t" style="left:2361px;top:1269px;font-size:18px;line-height:26px;color:#474747">10/6/13</div>
<div class="t" style="left:1275px;top:1339px;font-size:18px;line-height:26px;color:#474747">#253</div>
<div class="t" style="left:1370px;top:1339px;font-size:18px;line-height:26px;color:#474747">Parkside Restaurant</div>
<div class="t" style="left:1577px;top:1339px;font-size:18px;line-height:26px;color:#474747">Kristin</div>
<div class="t" style="left:1737px;top:1339px;font-size:18px;line-height:26px;color:#474747">Watson</div>
<div class="t" style="left:1954px;top:1339px;font-size:18px;line-height:26px;color:#474747">Prep Cook</div>
<div class="t" style="left:2156px;top:1339px;font-size:18px;line-height:26px;color:#474747">8/2/90</div>
<div class="t" style="left:2361px;top:1339px;font-size:18px;line-height:26px;color:#474747">10/6/13</div>
<div class="t" style="left:1275px;top:1409px;font-size:18px;line-height:26px;color:#474747">#253</div>
<div class="t" style="left:1370px;top:1409px;font-size:18px;line-height:26px;color:#474747">Parkside Restaurant</div>
<div class="t" style="left:1577px;top:1409px;font-size:18px;line-height:26px;color:#474747">Theresa</div>
<div class="t" style="left:1737px;top:1409px;font-size:18px;line-height:26px;color:#474747">Webb</div>
<div class="t" style="left:1954px;top:1409px;font-size:18px;line-height:26px;color:#474747">Prep Cook</div>
<div class="t" style="left:2156px;top:1409px;font-size:18px;line-height:26px;color:#474747">5/27/91</div>
<div class="t" style="left:2361px;top:1409px;font-size:18px;line-height:26px;color:#474747">8/21/15</div>
<div class="t" style="left:1275px;top:1478px;font-size:18px;line-height:26px;color:#474747">#253</div>
<div class="t" style="left:1370px;top:1478px;font-size:18px;line-height:26px;color:#474747">Parkside Restaurant</div>
<div class="t" style="left:1577px;top:1478px;font-size:18px;line-height:26px;color:#474747">Ralph</div>
<div class="t" style="left:1737px;top:1478px;font-size:18px;line-height:26px;color:#474747">Edwards</div>
<div class="t" style="left:1954px;top:1478px;font-size:18px;line-height:26px;color:#474747">Prep Cook</div>
<div class="t" style="left:2156px;top:1478px;font-size:18px;line-height:26px;color:#474747">7/11/85</div>
<div class="t" style="left:2361px;top:1478px;font-size:18px;line-height:26px;color:#474747">9/23/16</div>
<div class="t" style="left:1275px;top:1548px;font-size:18px;line-height:26px;color:#474747">#253</div>
<div class="t" style="left:1370px;top:1548px;font-size:18px;line-height:26px;color:#474747">Parkside Restaurant</div>
<div class="t" style="left:1577px;top:1548px;font-size:18px;line-height:26px;color:#474747">Floyd</div>
<div class="t" style="left:1737px;top:1548px;font-size:18px;line-height:26px;color:#474747">Miles</div>
<div class="t" style="left:1954px;top:1548px;font-size:18px;line-height:26px;color:#474747">Server</div>
<div class="t" style="left:2156px;top:1548px;font-size:18px;line-height:26px;color:#474747">8/16/89</div>
<div class="t" style="left:2361px;top:1548px;font-size:18px;line-height:26px;color:#474747">5/30/14</div>
<div class="a" style="left:1253px;top:1107px;width:1480px;height:3px;background:#d3d6e0"></div>
<div class="a" style="left:1253px;top:1314px;width:1480px;height:3px;background:#d3d6e0"></div>
<div class="a" style="left:1253px;top:1384px;width:1480px;height:3px;background:#d3d6e0"></div>
<div class="a" style="left:1253px;top:1455px;width:1480px;height:3px;background:#d3d6e0"></div>
<div class="a" style="left:1253px;top:1524px;width:1480px;height:3px;background:#d3d6e0"></div>
<div class="a" style="left:1253px;top:1594px;width:1480px;height:3px;background:#d3d6e0"></div>
<svg style="left:2012px;top:1364px" width="26" height="30" viewBox="0 0 26 30"><path d="M3 2l18 14-8 1 5 9-4 2-5-9-6 5z" fill="#111" stroke="#fff" stroke-width="1"/></svg>
<div class="a" style="left:2746px;top:960px;width:360px;height:637px;background:#fff;box-shadow:0 1px 3px rgba(0,0,0,0.10)"></div>
<svg style="left:2973px;top:977px" width="198" height="198" viewBox="0 0 198 198"><defs><clipPath id="av"><circle cx="99" cy="99" r="98.5"/></clipPath><filter id="bl"><feGaussianBlur stdDeviation="2.5"/></filter></defs>
<g clip-path="url(#av)"><rect width="198" height="198" fill="#dcd8ce"/><g filter="url(#bl)">
<rect x="0" y="0" width="198" height="60" fill="#bdb8ac"/>
<rect x="0" y="40" width="14" height="150" fill="#a8a498"/>
<rect x="18" y="54" width="18" height="95" fill="#f6f4ee"/>
<rect x="36" y="44" width="7" height="108" fill="#4e4a38"/>
<circle cx="39" cy="47" r="5" fill="#2a2820"/>
<path d="M62 30C70 40 66 90 68 150L90 160L110 100L100 40z" fill="#3a3028"/>
<ellipse cx="90" cy="90" rx="20" ry="32" fill="#c8a088"/>
<path d="M25 198C35 170 55 150 75 145L95 140L100 198z" fill="#5a70a0"/>
<path d="M40 180l15-15 10 12M60 160l12 8" stroke="#b8c8e0" stroke-width="5" fill="none"/>
</g></g></svg>
<div class="t" style="left:2993px;top:1193px;font-size:17.5px;line-height:24px;color:#7a7a7a">Brooklyn</div>
<div class="t" style="left:2888px;top:1258px;font-size:15.5px;line-height:28px;color:#a8a8a8">Address</div>
<div class="t" style="left:2888px;top:1283px;font-size:22.5px;line-height:28px;color:#4a4a4a">4517 Washington</div>
<div class="t" style="left:2888px;top:1311px;font-size:22.5px;line-height:28px;color:#4a4a4a">Kentucky 39495</div>
<div class="t" style="left:2888px;top:1357px;font-size:15.5px;line-height:28px;color:#b0b0b0">Phone number</div>
<div class="t" style="left:2888px;top:1382px;font-size:22.5px;line-height:28px;color:#4a4a4a">(319) 555-0115</div>
<div class="t" style="left:2888px;top:1428px;font-size:15.5px;line-height:28px;color:#b0b0b0">Phone number</div>
<div class="t" style="left:2888px;top:1453px;font-size:22.5px;line-height:28px;color:#4a4a4a">(319) 555-0115</div>
<div class="t" style="left:2888px;top:1499px;font-size:15.5px;line-height:28px;color:#b0b0b0">Phone number</div>
<div class="t" style="left:2888px;top:1525px;font-size:22.5px;line-height:28px;color:#4a4a4a">(319) 555-0115</div>
<div class="a" style="left:3036px;top:507px;width:8px;height:1006px;background:#a9a9a9;border-radius:4px"></div><!-- lower frame -->
<div class="a" style="left:825px;top:1887px;width:84px;height:273px;background:#3f5f8b"></div>
<div class="a" style="left:825px;top:2010px;width:84px;height:77px;background:#1b365e"></div>
<svg style="left:873px;top:1900px" width="24" height="22" viewBox="0 0 24 22"><path d="M11 3l-8 8 8 8M20 3l-8 8 8 8" fill="none" stroke="#e8eef8" stroke-width="2.6"/></svg>
<div class="a" style="left:909px;top:1887px;width:2149px;height:273px;background:#fff"></div>
<div class="a" style="left:907px;top:1887px;width:3px;height:273px;background:#7f74cc"></div>
<div class="a" style="left:825px;top:1885px;width:2233px;height:3px;background:#c9b8ef"></div>
<div class="t" style="left:930px;top:1917px;font-size:24px;line-height:32px;color:#333">Overview</div>
<div class="a" style="left:909px;top:1971px;width:2149px;height:3px;background:#cfc6e6"></div>
<div class="a" style="left:2681px;top:1913px;width:215px;height:40px;background:#fff;box-shadow:0 1px 4px rgba(0,0,0,0.22)"></div>
<svg style="left:2691px;top:1923px" width="22" height="22" viewBox="0 0 22 22"><circle cx="9" cy="9" r="5.5" fill="none" stroke="#777" stroke-width="2"/><path d="M13 13l5 5" stroke="#777" stroke-width="2.4"/></svg>
<div class="t" style="left:2720px;top:1921px;font-size:17px;line-height:24px;font-style:italic;color:#cdd0d8">Parkside Restaurant</div>
<div class="a" style="left:2916px;top:1913px;width:200px;height:40px;background:#fff;box-shadow:0 1px 4px rgba(0,0,0,0.22)"></div>
<div class="a" style="left:2929px;top:1912px;width:36px;height:36px;border-radius:50%;background:radial-gradient(circle at 50% 40%,#6a5a55 0,#7a6a66 30%,#b0a8a0 70%)"></div>
<div class="t" style="left:2976px;top:1910px;font-size:17px;line-height:24px;color:#555">Peter Parker</div>
<div class="t" style="left:2976px;top:1934px;font-size:12px;line-height:18px;font-style:italic;color:#bbb">Clerk</div>
<!-- lower map -->
<svg style="left:950px;top:2016px" width="1056" height="144" viewBox="0 0 1056 144">
<rect width="1056" height="144" fill="#e3e3e3"/>
<path d="M147 0L363 0L330 80L306 144L100 144L112 100L132 40Z" fill="#b3d89a"/>
<path d="M796 0H854V78H796z" fill="#e6e1bd"/>
<g fill="none" stroke="#fafafa" stroke-width="10" stroke-linecap="round"><path d="M200 0C215 40 240 80 226 105C200 130 170 140 150 144"/><path d="M566 0L540 144"/><path d="M560 42L1056 15M555 115L1056 78M660 0L670 144M874 0L878 85M935 0L945 144M0 130C40 110 90 100 118 70"/></g>
<rect x="26" y="24" width="212" height="30" fill="#fff"/>
<circle cx="40" cy="38" r="5.5" fill="none" stroke="#666" stroke-width="2"/><path d="M44 42l5 5" stroke="#666" stroke-width="2.2"/>
<text x="57" y="45" font-size="16" font-style="italic" fill="#b8bcc8" font-family="Liberation Sans">Parkside Restaurant</text>
<path d="M252 52l6-10 6 10z" fill="#5a4a2a"/><path d="M818 18v10M824 16v12" stroke="#8a7a3a" stroke-width="3"/>
<text x="1018" y="47" font-size="10" fill="#777" font-family="Liberation Sans">1001</text>
<circle cx="474" cy="135" r="17" fill="#fff"/>
</svg>
<div class="a" style="left:2047px;top:2016px;width:830px;height:144px;background:#fff;box-shadow:0 1px 3px rgba(0,0,0,0.10)"></div>
<div class="a" style="left:2519px;top:2016px;width:116px;height:144px;background:#f2f4f8"></div>
<div class="t" style="left:2069px;top:2040px;font-size:32.5px;line-height:40px;color:#44536e">Revenue</div>
<svg style="left:2047px;top:2016px" width="830" height="144" viewBox="0 0 830 144"><path d="M400 150C430 120 450 110 470 110C490 110 515 125 540 150" fill="none" stroke="#2f9c8b" stroke-width="5"/></svg>
<div class="a" style="left:942px;top:2140px;width:1592px;height:11px;background:#9d9d9d;border-radius:6px;opacity:0.85"></div>
<!-- ===== RIGHT PANEL ===== -->
<div class="a" style="left:3058px;top:212px;width:464px;height:1948px;background:#fff;border-left:2px solid #efefef"></div>
<div class="t" style="left:3089px;top:236px;font-size:22.5px;line-height:32px;color:#8a8a8a">Design</div>
<div class="t" style="left:3189px;top:236px;font-size:22.5px;line-height:32px;color:#222;font-weight:bold">Prototype</div>
<div class="a" style="left:3058px;top:291px;width:464px;height:2px;background:#f2f2f2"></div>
<div class="t" style="left:3089px;top:322px;font-size:22.5px;line-height:32px;color:#888">Interactions</div>
<div class="a" style="left:3058px;top:384px;width:464px;height:2px;background:#f2f2f2"></div>
<div class="t" style="left:3089px;top:418px;font-size:21.2px;line-height:32px;color:#222;font-weight:bold">Overflow scrolling</div>
<div class="t" style="left:3089px;top:480px;font-size:22.5px;line-height:32px;color:#c8c8c8">No scrolling</div>
<svg style="left:3216px;top:490px" width="14" height="10" viewBox="0 0 14 10"><path d="M3 3l4 4 4-4" fill="none" stroke="#c8c8c8" stroke-width="2"/></svg>
<div class="a" style="left:3058px;top:540px;width:464px;height:2px;background:#f2f2f2"></div>
<div class="a" style="left:3090px;top:574px;width:399px;height:61px;box-sizing:border-box;border:2.5px solid #3a3a3a;border-radius:9px"></div>
<div class="t" style="left:3090px;top:589px;width:399px;text-align:center;font-size:22.8px;line-height:32px;color:#333">Show prototype settings</div>
<div class="a" style="left:3058px;top:667px;width:464px;height:2px;background:#f2f2f2"></div>
<div class="t" style="left:3089px;top:700px;font-size:21.2px;line-height:32px;color:#222;font-weight:bold">Removing a connection</div>
<svg style="left:3462px;top:704px" width="24" height="24" viewBox="0 0 24 24"><path d="M3 3l18 18M21 3L3 21" stroke="#333" stroke-width="2.4"/></svg>
<svg style="left:3088px;top:762px" width="34" height="32" viewBox="0 0 34 32"><path d="M3 3h8v26H3" fill="none" stroke="#333" stroke-width="2"/><circle cx="13" cy="16" r="3.5" fill="none" stroke="#333" stroke-width="1.8"/><path d="M20 12l8 8M28 12l-8 8" stroke="#333" stroke-width="2"/></svg>
<div class="t" style="left:3151px;top:762px;font-size:22.8px;line-height:32px;color:#333">To delete a connection, click</div>
<div class="t" style="left:3151px;top:792px;font-size:22.8px;line-height:32px;color:#333">and drag on either end.</div>
<div class="t" style="left:3089px;top:870px;font-size:21.2px;line-height:32px;color:#222;font-weight:bold">Running your prototype</div>
<svg style="left:3462px;top:874px" width="24" height="24" viewBox="0 0 24 24"><path d="M3 3l18 18M21 3L3 21" stroke="#333" stroke-width="2.4"/></svg>
<svg style="left:3096px;top:935px" width="22" height="24" viewBox="0 0 22 24"><path d="M4 3l14 9-14 9z" fill="none" stroke="#333" stroke-width="2.4" stroke-linejoin="round"/></svg>
<div class="t" style="left:3151px;top:931px;font-size:22.8px;line-height:32px;color:#333">Use the play button in the</div>
<div class="t" style="left:3151px;top:962px;font-size:22.8px;line-height:32px;color:#333">toolbar to play your prototype.</div>
<div class="t" style="left:3151px;top:993px;font-size:22.8px;line-height:32px;color:#333">If there are no connections, the</div>
<div class="t" style="left:3151px;top:1024px;font-size:22.8px;line-height:32px;color:#333">play button can be used to play</div>
<div class="t" style="left:3151px;top:1054px;font-size:22.8px;line-height:32px;color:#333">a presentation of your frames.</div>
<!-- ===== VIDEO CONTROLS ===== -->
<div class="a" style="left:40px;top:2067px;width:93px;height:66px;background:rgba(16,16,16,0.965);border-radius:9px"></div>
<div class="a" style="left:71px;top:2087px;width:8px;height:26px;background:#fff;border-radius:3px"></div>
<div class="a" style="left:83px;top:2087px;width:8px;height:26px;background:#fff;border-radius:3px"></div>
<div class="a" style="left:147px;top:2067px;width:3400px;height:66px;background:rgba(16,16,16,0.965);border-radius:9px 0 0 9px"></div>
<div class="a" style="left:174px;top:2097px;width:2795px;height:7px;background:#ff8a14;border-radius:4px"></div>
<div class="a" style="left:2969px;top:2097px;width:531px;height:7px;background:#4a4a4a;border-radius:4px"></div>
<div class="a" style="left:3406px;top:2044px;width:66px;height:66px;border-radius:50%;background:rgba(8,8,8,0.9);filter:blur(1.5px)"></div>
<div class="t" style="left:3406px;top:2060px;width:66px;text-align:center;font-size:30px;line-height:34px;font-weight:bold;color:#0a0a0a">?</div>
<div class="a" style="left:2941px;top:2056px;width:55px;height:28px;background:#fff;border-radius:5px"></div>
<svg style="left:2961px;top:2083px" width="16" height="8" viewBox="0 0 16 8"><path d="M0 0h16L8 7z" fill="#fff"/></svg>
<div class="t" style="left:2941px;top:2058px;width:55px;text-align:center;font-size:17px;line-height:24px;color:#111">45:49</div>

</div>
<!-- right-side player icons on black -->
<svg style="left:3518px;top:2078px" width="48" height="44" viewBox="0 0 48 44"><path d="M4 14h7l10-8v32l-10-8H4z" fill="#fff"/><g fill="none" stroke="#000" stroke-width="7"><path d="M6 40L44 6"/></g><g fill="none" stroke="#fff" stroke-width="4" stroke-linecap="round"><path d="M6 40L44 6"/><path d="M29 16a9 9 0 0 1 0 13M35 10a17 17 0 0 1 0 25"/></g></svg>
<svg style="left:3580px;top:2082px" width="42" height="36" viewBox="0 0 42 36"><rect x="3.5" y="4" width="35" height="28" rx="4" fill="none" stroke="#fff" stroke-width="3.6"/><text x="21" y="25" text-anchor="middle" font-family="Liberation Sans" font-weight="bold" font-size="17" fill="#fff">CC</text></svg>
<svg style="left:3640px;top:2080px" width="46" height="42" viewBox="0 0 46 42"><path d="M23 35H6a2.5 2.5 0 0 1-2.5-2.5V6A2.5 2.5 0 0 1 6 3.5h28A2.5 2.5 0 0 1 36.5 6v12" fill="none" stroke="#fff" stroke-width="3.6"/><path d="M10 12h16M10 19h9M10 26h6" stroke="#fff" stroke-width="3.6"/><circle cx="31" cy="27" r="6.5" fill="none" stroke="#fff" stroke-width="3.8"/><path d="M36 32l6 6" stroke="#fff" stroke-width="4.2" stroke-linecap="round"/></svg>
<svg style="left:3700px;top:2080px" width="40" height="40" viewBox="0 0 40 40"><g fill="#fff"><circle cx="20" cy="20" r="12"/><g id="tooth"><rect x="15" y="1" width="10" height="10" rx="4"/></g><use href="#tooth" transform="rotate(60 20 20)"/><use href="#tooth" transform="rotate(120 20 20)"/><use href="#tooth" transform="rotate(180 20 20)"/><use href="#tooth" transform="rotate(240 20 20)"/><use href="#tooth" transform="rotate(300 20 20)"/></g><circle cx="20" cy="20" r="5.5" fill="#000"/></svg>
<svg style="left:3760px;top:2081px" width="40" height="40" viewBox="0 0 40 40"><g fill="none" stroke="#fff" stroke-width="3.8"><path d="M3 3l11 11M14 5v9H5M37 3L26 14M26 5v9h9M3 37l11-11M5 26h9v9M37 37L26 26M35 26h-9v9"/></g></svg>
<!-- heart -->
<svg style="left:3785px;top:25px" width="32" height="30" viewBox="0 0 32 30"><path d="M16 27C6 19 2 14 2 9a7 7 0 0 1 14-2 7 7 0 0 1 14 2c0 5-4 10-14 18z" fill="none" stroke="#fff" stroke-width="3"/></svg>
<!-- webcam -->
<div class="a" style="left:3150px;top:0;width:618px;height:346px;overflow:hidden;background:#8e8262">
<svg style="left:0;top:0" width="618" height="346" viewBox="0 0 618 346">
<defs>
<filter id="wb" x="-40%" y="-40%" width="180%" height="180%"><feGaussianBlur stdDeviation="24"/></filter>
<filter id="wb1" x="-40%" y="-40%" width="180%" height="180%"><feGaussianBlur stdDeviation="16"/></filter>
<filter id="wb2" x="-20%" y="-20%" width="140%" height="140%"><feGaussianBlur stdDeviation="3.5"/></filter>
<linearGradient id="bgg" x1="0" y1="0" x2="1" y2="0.3"><stop offset="0" stop-color="#85774f"/><stop offset="0.45" stop-color="#9a8c68"/><stop offset="0.7" stop-color="#a89c84"/><stop offset="1" stop-color="#aaa090"/></linearGradient>
</defs>
<rect width="618" height="346" fill="url(#bgg)"/>
<g filter="url(#wb)">
<rect x="450" y="0" width="168" height="230" fill="#b5ab98"/>
<ellipse cx="45" cy="240" rx="70" ry="110" fill="#1f1d18"/>
<ellipse cx="375" cy="195" rx="55" ry="65" fill="#24221d"/>
<ellipse cx="560" cy="290" rx="90" ry="55" fill="#5a5444"/>
<ellipse cx="110" cy="330" rx="80" ry="40" fill="#3a3628"/>
</g>
<g filter="url(#wb1)">
<ellipse cx="172" cy="185" rx="62" ry="88" fill="#e0d8b0"/>
<ellipse cx="172" cy="180" rx="32" ry="52" fill="#fbf6dc"/>
</g>
<g filter="url(#wb2)">
<path d="M183 346C186 300 200 262 240 250C275 240 315 240 350 248C390 258 418 295 433 346z" fill="#6a6a68"/>
<path d="M245 240C250 262 270 272 295 272C320 272 338 262 342 238L338 226C325 248 265 250 250 226z" fill="#363230"/>
<path d="M262 238C275 256 315 258 332 238L326 228C312 244 280 244 268 228z" fill="#b49a92"/>
<path d="M250 262C275 280 320 280 345 262" stroke="#5a5a58" stroke-width="8" fill="none"/>
<path d="M238 270C236 300 234 325 232 346M325 272C326 300 327 325 328 346" stroke="#3a3a38" stroke-width="5" fill="none" stroke-dasharray="4 3"/>
<ellipse cx="293" cy="170" rx="40" ry="66" fill="#cfa692"/>
<ellipse cx="298" cy="160" rx="24" ry="36" fill="#dcb8a4"/>
<path d="M262 200C270 232 290 242 300 242C315 242 330 228 334 200C320 212 285 214 262 200z" fill="#b07c68" opacity="0.8"/>
<path d="M252 128C252 95 275 78 302 80C330 82 345 100 342 135C325 118 280 112 252 128z" fill="#a4845e"/>
<path d="M232 150C238 108 268 92 300 92C330 93 348 112 350 145" stroke="#222" stroke-width="5" fill="none"/>
<ellipse cx="236" cy="172" rx="15" ry="30" fill="#1e2a32"/>
<path d="M240 148C236 165 236 185 240 198" stroke="#5a9ac0" stroke-width="3" fill="none"/>
<ellipse cx="342" cy="150" rx="10" ry="22" fill="#2a3034"/>
</g>
</svg>
<div class="a" style="left:0;top:286px;width:85px;height:60px;background:#121212"></div>
<div class="t" style="left:10px;top:297px;font-size:29px;line-height:40px;color:#fff;font-weight:bold">Alex</div>
</div>
</body></html>
